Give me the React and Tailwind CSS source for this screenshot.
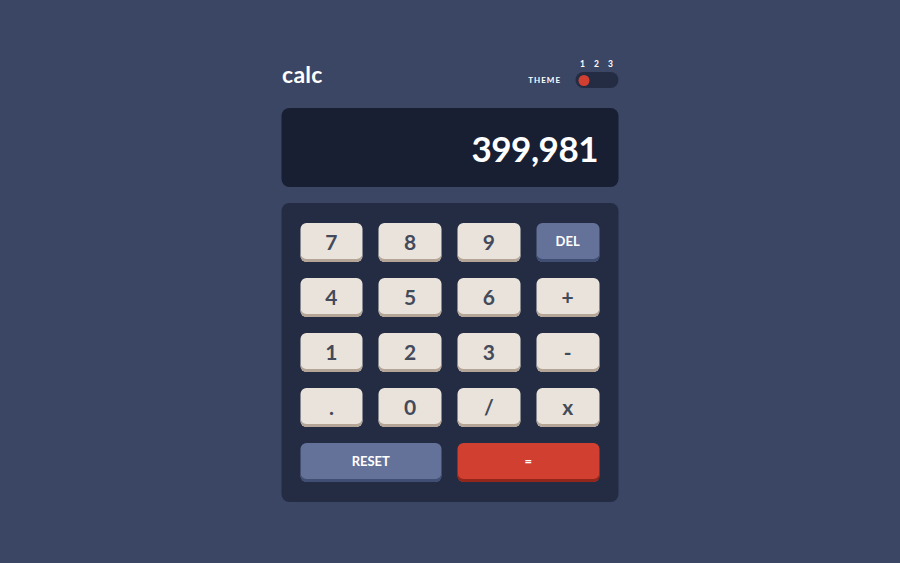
import React from "react";

const font = { fontFamily: '"Lato", "Open Sans", sans-serif' };

function Key({ label, kind = "num", wide = false }) {
  const base =
    "h-[39px] rounded-[6px] flex items-center justify-center font-bold pb-[2px]";
  let cls = "";
  if (kind === "num")
    cls =
      "bg-[#eae3dc] text-[#434a59] text-[21px] shadow-[inset_0_-3px_0_#b4a597]";
  else if (kind === "blue")
    cls =
      "bg-[#647198] text-white text-[13px] shadow-[inset_0_-3px_0_#414e73]";
  else
    cls =
      "bg-[#d03f2f] text-white text-[13px] shadow-[inset_0_-3px_0_#93261a]";
  return (
    <div className={`${base} ${cls} ${wide ? "col-span-2" : ""}`}>{label}</div>
  );
}

export default function App() {
  const rows = [
    ["7", "8", "9"],
    ["4", "5", "6"],
    ["1", "2", "3"],
    [".", "0", "/"],
  ];
  const ops = ["DEL", "+", "-", "x"];
  return (
    <div
      className="w-full h-[563px] bg-[#3b4664] flex justify-center"
      style={font}
    >
      <div className="w-[337px] pt-[58px] -translate-x-[0.5px]">
        <div className="flex items-end justify-between h-[30px] pl-[1px]">
          <div className="text-white text-[23px] font-bold leading-none pb-[2px] tracking-[0.3px]">
            calc
          </div>
          <div className="flex items-end gap-[14px]">
            <div className="text-white text-[8px] font-bold tracking-[1px] pb-[4px] leading-none">
              THEME
            </div>
            <div className="flex flex-col items-stretch w-[43px]">
              <div className="flex justify-between px-[5px] text-white text-[8.5px] font-bold leading-none mb-[4px]">
                <span>1</span>
                <span>2</span>
                <span>3</span>
              </div>
              <div className="h-[16px] rounded-full bg-[#232c43] flex items-center px-[3px]">
                <div className="w-[11px] h-[11px] rounded-full bg-[#d03f2f]" />
              </div>
            </div>
          </div>
        </div>
        <div className="mt-[20px] h-[79px] rounded-[8px] bg-[#181f33] flex items-center justify-end px-[20px] pt-[2px]">
          <span className="text-white text-[35px] font-bold tracking-[-0.5px]">
            399,981
          </span>
        </div>
        <div className="mt-[16px] rounded-[8px] bg-[#232c43] px-[19px] py-[20px] grid grid-cols-4 gap-x-[16px] gap-y-[16px]">
          {rows.map((r, i) => (
            <React.Fragment key={i}>
              {r.map((k) => (
                <Key key={k} label={k} />
              ))}
              <Key label={ops[i]} kind={i === 0 ? "blue" : "num"} />
            </React.Fragment>
          ))}
          <Key label="RESET" kind="blue" wide />
          <Key label="=" kind="red" wide />
        </div>
      </div>
    </div>
  );
}
